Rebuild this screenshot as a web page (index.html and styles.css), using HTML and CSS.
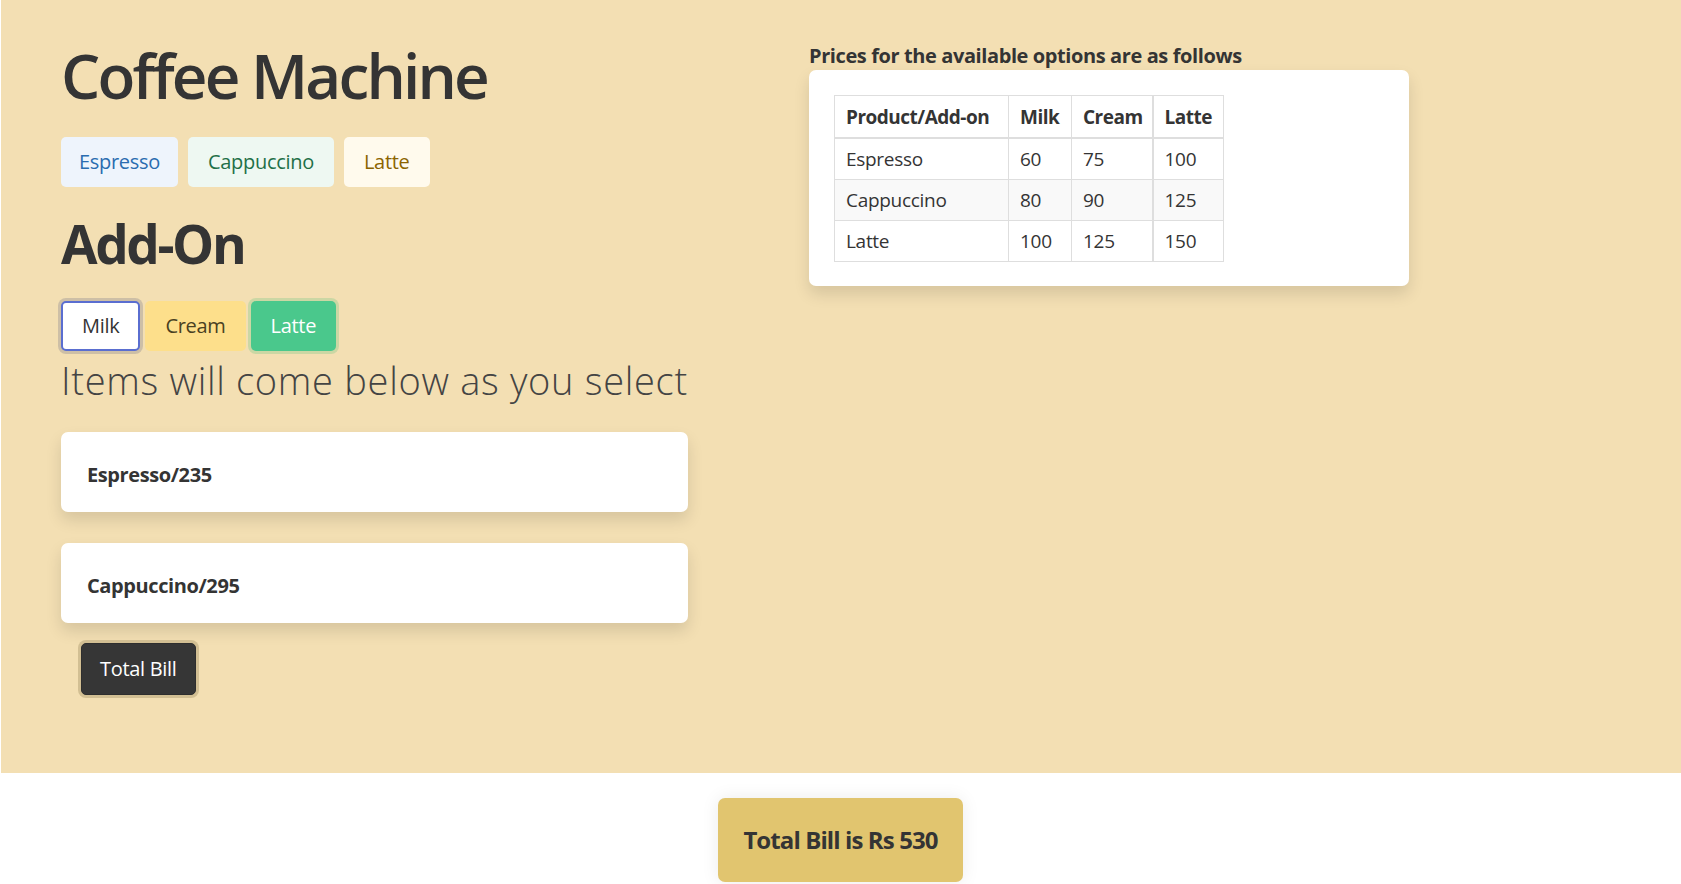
FILE: index.html
```html
<!DOCTYPE html>
<html lang="en">
<head>
<meta charset="utf-8">
<title>Coffee Machine</title>
<link rel="stylesheet" href="styles.css">
</head>
<body>
<div class="page">
  <div class="left">
    <h1 class="title">Coffee Machine</h1>
    <div class="btn-row">
      <button class="btn btn-espresso">Espresso</button>
      <button class="btn btn-cappuccino">Cappuccino</button>
      <button class="btn btn-latte">Latte</button>
    </div>
    <h2 class="addon-title">Add-On</h2>
    <div class="btn-row tight">
      <button class="btn btn-milk">Milk</button>
      <button class="btn btn-cream">Cream</button>
      <button class="btn btn-green">Latte</button>
    </div>
    <p class="hint">Items will come below as you select</p>
    <div class="item-card">Espresso/235</div>
    <div class="item-card">Cappuccino/295</div>
    <button class="btn btn-dark">Total Bill</button>
  </div>
  <div class="right">
    <div class="prices-label">Prices for the available options are as follows</div>
    <div class="table-card">
      <table class="price-table">
        <thead>
          <tr><th class="c1">Product/Add-on</th><th class="c2">Milk</th><th class="c3 thick">Cream</th><th class="c4">Latte</th></tr>
        </thead>
        <tbody>
          <tr><td>Espresso</td><td>60</td><td class="thick">75</td><td>100</td></tr>
          <tr class="stripe"><td>Cappuccino</td><td>80</td><td class="thick">90</td><td>125</td></tr>
          <tr><td>Latte</td><td>100</td><td class="thick">125</td><td>150</td></tr>
        </tbody>
      </table>
    </div>
  </div>
</div>
<div class="bottom">
  <div class="bill">Total Bill is Rs 530</div>
</div>
</body>
</html>
```

FILE: styles.css
```css
* { box-sizing: border-box; }
html, body { margin: 0; padding: 0; background: #fff; }
body {
  font-family: "Open Sans", "Noto Sans", sans-serif;
  color: #343434;
}
.page {
  margin-left: 1px;
  height: 773px;
  background: #f3dfb3;
  display: flex;
  padding-left: 60px;
  gap: 121px;
}
.left { width: 627px; padding-top: 38px; }
.right { width: 600px; padding-top: 42px; }

.title {
  margin: 0;
  font-size: 62px;
  line-height: 74px;
  font-weight: 600;
  letter-spacing: -2.8px;
}
.btn-row { display: flex; gap: 10px; margin-top: 25px; }
.btn-row.tight { gap: 5px; }
.btn {
  font-family: inherit;
  font-size: 20px;
  line-height: 30px;
  padding: 9px 17px;
  border: 1px solid transparent;
  border-radius: 5px;
  cursor: pointer;
  letter-spacing: -0.3px;
}
.btn-espresso { background: #eef4fc; color: #2a6cb0; }
.btn-cappuccino { background: #eef8f2; color: #1f7048; padding: 9px 19px; }
.btn-latte { background: #fffaed; color: #8c6400; padding: 9px 19px; }
.btn-milk {
  background: #fff; color: #343434;
  border: 2px solid #5a6ed0;
  padding: 8px 19px;
  box-shadow: 0 0 0 3px #cdbfa6;
}
.btn-cream { background: #fddf8b; color: #4a3f22; padding: 9px 19px; }
.btn-green { background: #4ac88c; color: #fff; padding: 9px 19px; box-shadow: 0 0 0 3px #cbd7a4; }

.addon-title {
  margin: 25px 0 0;
  font-size: 53px;
  line-height: 64px;
  font-weight: 700;
  letter-spacing: -2.4px;
}
.hint {
  margin: 7px 0 0;
  font-size: 38px;
  line-height: 44px;
  font-weight: 300;
  color: #444;
  letter-spacing: 0.7px;
}
.item-card {
  margin-top: 30px;
  background: #fff;
  border-radius: 7px;
  padding: 28px 26px 22px;
  font-size: 20px;
  line-height: 30px;
  font-weight: 700;
  box-shadow: 0 8px 16px rgba(0,0,0,0.12);
  letter-spacing: -0.4px;
}
.item-card + .item-card { margin-top: 31px; }
.btn-dark {
  margin: 20px 0 0 20px;
  background: #363636;
  color: #fff;
  border: 1px solid #2e2e2e;
  padding: 10px 18px;
  box-shadow: 0 0 0 3px #d2bf93;
}

.prices-label {
  font-size: 20px;
  line-height: 28px;
  font-weight: 700;
  letter-spacing: -0.4px;
}
.table-card {
  background: #fff;
  border-radius: 7px;
  padding: 25px 25px 24px;
  box-shadow: 0 8px 16px rgba(0,0,0,0.12);
}
.price-table {
  border-collapse: collapse;
  table-layout: fixed;
  width: 389px;
  font-size: 19px;
  line-height: 26px;
  color: #343434;
}
.price-table th, .price-table td {
  border: 1px solid #dedede;
  padding: 7px 11px;
  text-align: left;
  letter-spacing: -0.3px;
  white-space: nowrap;
}
.price-table th { font-weight: 700; border-bottom: 2px solid #dedede; padding-top: 8px; letter-spacing: -0.5px; }
.price-table .thick { border-right: 2px solid #dedede; }
.price-table .c1 { width: 174px; }
.price-table .c2 { width: 63px; }
.price-table .c3 { width: 81px; }
.price-table .c4 { width: 71px; }
.price-table .stripe td { background: #f9f9f9; }

.bottom {
  display: flex;
  justify-content: center;
  padding-top: 25px;
  padding-bottom: 10px;
}
.bill {
  background: #e1c56f;
  border-radius: 7px;
  padding: 24px 25px;
  font-size: 24px;
  line-height: 36px;
  font-weight: 700;
  color: #343434;
  letter-spacing: -0.9px;
  box-shadow: 0 0 18px rgba(0,0,0,0.08);
}
```
